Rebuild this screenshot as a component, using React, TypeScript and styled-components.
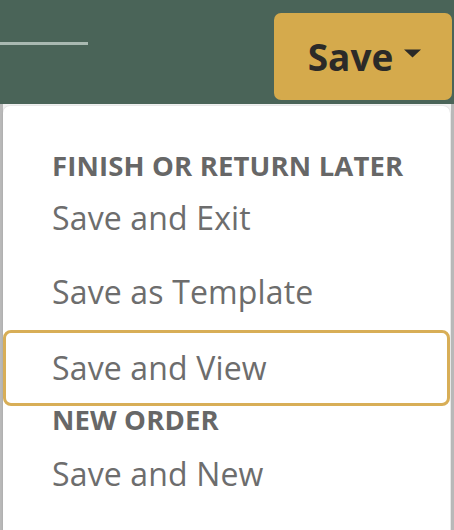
import React from "react";
import styled, { createGlobalStyle } from "styled-components";

const Global = createGlobalStyle`
  html, body { margin: 0; padding: 0; }
  body {
    width: 454px;
    height: 530px;
    overflow: hidden;
    font-family: "Open Sans", "Noto Sans", sans-serif;
    background: #e9e9e9;
  }
`;

const Page = styled.div`
  position: relative;
  width: 454px;
  height: 530px;
  display: flex;
  flex-direction: column;
`;

const Header = styled.header`
  height: 104px;
  background: #4a6458;
  display: flex;
  align-items: flex-start;
  justify-content: space-between;
  box-sizing: border-box;
  padding: 13px 2px 0 0;
`;

const Rule = styled.div`
  width: 88px;
  height: 3px;
  margin-top: 29px;
  background: #a9b9b1;
`;

const SaveButton = styled.button`
  width: 178px;
  height: 87px;
  border: none;
  border-radius: 7px;
  background: #d5aa4c;
  color: #2b2a28;
  font-family: "Open Sans", sans-serif;
  font-weight: 700;
  font-size: 37px;
  display: flex;
  align-items: center;
  justify-content: center;
  gap: 10px;
  padding: 0 0 0 4px;
`;

const Caret = styled.svg`
  width: 19px;
  height: 9px;
  margin-top: -6px;
`;

const Body = styled.div`
  flex: 1;
  display: flex;
  justify-content: space-between;
  background: #f2f2f2;
`;

const SideLine = styled.div`
  width: 3px;
  background: #b9b9b9;
`;

const Menu = styled.div`
  position: absolute;
  left: 3px;
  top: 106px;
  width: 447px;
  height: 440px;
  background: #ffffff;
  border-radius: 7px;
  box-shadow: 0 0 2px rgba(0, 0, 0, 0.15);
  box-sizing: border-box;
  padding-top: 46px;
  display: flex;
  flex-direction: column;
`;

const GroupTitle = styled.div`
  padding-left: 49px;
  font-size: 27.5px;
  line-height: 28px;
  font-weight: 700;
  color: #676767;
  letter-spacing: 0.15px;
`;

const Item = styled.div<{ $active?: boolean; $gap?: number; $h?: number }>`
  box-sizing: border-box;
  height: ${(p) => p.$h ?? 76}px;
  display: flex;
  align-items: center;
  padding-left: 46px;
  font-size: 32px;
  line-height: 40px;
  color: #6d6d6d;
  letter-spacing: 0.15px;
  margin-top: ${(p) => p.$gap ?? 0}px;
  border: 3px solid ${(p) => (p.$active ? "#d8ae57" : "transparent")};
  border-radius: 8px;
`;

export default function App() {
  return (
    <>
      <Global />
      <Page>
        <Header>
          <Rule />
          <SaveButton>
            Save
            <Caret viewBox="0 0 19 9">
              <path d="M1 0.5 L18 0.5 L9.5 8.5 Z" fill="#2b2a28" />
            </Caret>
          </SaveButton>
        </Header>
        <Body>
          <SideLine />
          <SideLine />
        </Body>
        <Menu>
          <GroupTitle>FINISH OR RETURN LATER</GroupTitle>
          <Item $gap={1} $h={73}>Save and Exit</Item>
          <Item>Save as Template</Item>
          <Item $active>Save and View</Item>
          <GroupTitle>NEW ORDER</GroupTitle>
          <Item $gap={2}>Save and New</Item>
        </Menu>
      </Page>
    </>
  );
}
